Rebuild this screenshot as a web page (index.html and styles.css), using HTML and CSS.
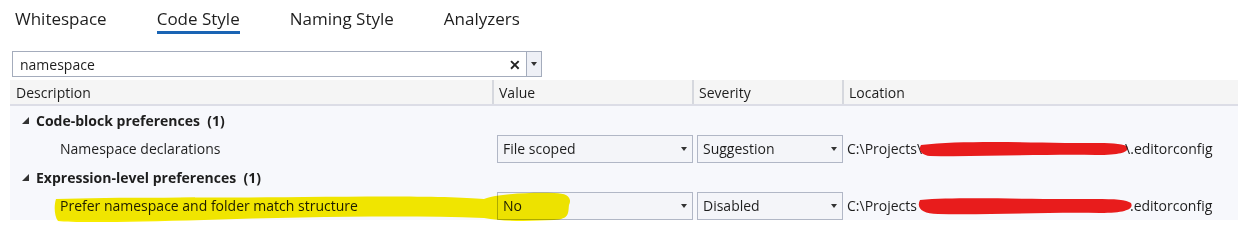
FILE: index.html
```html
<!DOCTYPE html>
<html>
<head>
<meta charset="utf-8">
<link rel="stylesheet" href="styles.css">
</head>
<body>
<div class="page">
  <nav class="tabs">
    <span class="tab">Whitespace</span>
    <span class="tab active">Code Style</span>
    <span class="tab">Naming Style</span>
    <span class="tab">Analyzers</span>
  </nav>

  <div class="search">
    <div class="search-input">namespace<span class="clear">✕</span></div>
    <div class="search-drop"><span class="arrow"></span></div>
  </div>

  <div class="table">
    <div class="row header">
      <div class="cell">Description</div>
      <div class="cell sep">Value</div>
      <div class="cell sep">Severity</div>
      <div class="cell sep">Location</div>
    </div>

    <div class="row group">
      <div class="cell group-cell"><span class="tri"></span>Code-block preferences&nbsp; (1)</div>
    </div>
    <div class="row item">
      <div class="cell desc">Namespace declarations</div>
      <div class="cell"><div class="combo value">File scoped<span class="arrow"></span></div></div>
      <div class="cell"><div class="combo sev">Suggestion<span class="arrow"></span></div></div>
      <div class="cell loc">C:\Projects\<span class="redact r1"><svg width="213" height="20" viewBox="0 0 213 20"><path d="M3 6 C 40 2, 90 3, 147 4 C 178 4, 200 3, 209 7 C 212 12, 206 16, 178 16 C 126 15, 62 18, 12 17 C 3 16, 0 11, 3 6 Z" fill="#e81c1c"/></svg></span>\.editorconfig</div>
    </div>

    <div class="row group">
      <div class="cell group-cell"><span class="tri"></span>Expression-level preferences&nbsp; (1)</div>
    </div>
    <div class="row item">
      <div class="cell desc">Prefer namespace and folder match structure</div>
      <div class="cell"><div class="combo value">No<span class="arrow"></span></div></div>
      <div class="cell"><div class="combo sev">Disabled<span class="arrow"></span></div></div>
      <div class="cell loc">C:\Projects<span class="redact r2"><svg width="218" height="20" viewBox="0 0 218 20"><path d="M4 4 C 40 1, 92 3, 152 3 C 188 3, 209 2, 215 7 C 218 13, 210 17, 184 17 C 132 16, 72 19, 22 18 C 6 18, 0 12, 4 4 Z" fill="#e81c1c"/></svg></span>.editorconfig</div>
    </div>

    <svg class="highlight" width="520" height="32" viewBox="0 0 520 32">
      <path d="M2 8 C 60 6, 150 7, 250 6 C 330 5, 400 5, 430 8 L 430 8 C 440 4, 470 1, 500 2 C 515 2, 518 8, 515 14 C 514 22, 516 28, 500 29 C 480 30, 450 31, 430 27 C 350 24, 250 26, 150 29 C 80 31, 20 32, 4 30 C 0 25, 0 14, 2 8 Z" fill="#f8ec00"/>
    </svg>
  </div>
</div>
</body>
</html>
```

FILE: styles.css
```css
* { box-sizing: border-box; }

html, body {
  margin: 0;
  padding: 0;
  background: #ffffff;
}

body {
  font-family: "Open Sans", "Noto Sans", sans-serif;
  color: #1e1e1e;
  font-size: 14px;
}

.page {
  width: 1238px;
  height: 240px;
  overflow: hidden;
}

/* Tabs */
.tabs {
  display: flex;
  gap: 50px;
  padding-left: 15px;
  height: 51px;
  padding-top: 7px;
}

.tab {
  font-size: 17px;
  line-height: 24px;
  height: 27px;
  color: #1e1e1e;
}

.tab.active {
  border-bottom: 3px solid #1a64b4;
}

/* Search */
.search {
  display: flex;
  margin-left: 12px;
  width: 530px;
  height: 26px;
}

.search-input {
  flex: 1;
  border: 1px solid #a4acbc;
  border-right: none;
  background: #fff;
  display: flex;
  align-items: center;
  padding-left: 7px;
  font-size: 14px;
  position: relative;
}

.clear {
  position: absolute;
  right: 5px;
  top: 3px;
  font-size: 14px;
  font-weight: 700;
  color: #222;
}

.search-drop {
  width: 16px;
  border: 1px solid #a4acbc;
  background: #eef0f6;
  display: flex;
  align-items: center;
  justify-content: center;
}

.arrow {
  width: 0;
  height: 0;
  border-left: 3.5px solid transparent;
  border-right: 3.5px solid transparent;
  border-top: 4px solid #333;
}

/* Table */
.table {
  margin-top: 3px;
  margin-left: 10px;
  position: relative;
}

.row {
  display: grid;
  grid-template-columns: 482px 200px 150px 1fr;
  align-items: center;
}

.header {
  background: #f5f5f5;
  height: 26px;
  border-bottom: 2px solid #dcdde6;
  align-items: stretch;
}

.header .cell {
  padding-left: 6px;
  padding-top: 2px;
  line-height: 22px;
}

.header .sep {
  border-left: 2px solid #d6d8de;
  padding-left: 5px;
}

.group, .item {
  background: #f7f8fc;
}

.group {
  height: 28px;
}

.item {
  height: 29px;
}

.group-cell {
  grid-column: 1 / -1;
  font-weight: 700;
  display: flex;
  align-items: center;
  padding-left: 12px;
}

.tri {
  width: 0;
  height: 0;
  border-left: 7px solid transparent;
  border-bottom: 7px solid #333;
  margin-right: 7px;
}

.desc {
  padding-left: 50px;
  position: relative;
  z-index: 1;
}

.combo {
  margin-left: 5px;
  height: 28px;
  border: 1px solid #b1b7c6;
  background: #f4f5f9;
  display: flex;
  align-items: center;
  justify-content: space-between;
  padding: 0 5px 0 5px;
  position: relative;
  z-index: 1;
}

.combo.value { width: 196px; }
.combo.sev { width: 146px; }

.loc {
  padding-left: 5px;
  white-space: nowrap;
  display: flex;
  align-items: center;
}

.redact {
  display: inline-flex;
}

.r1 { margin-left: -4px; margin-right: -6px; }
.r2 { margin-left: -1px; margin-right: -4px; }

.highlight {
  position: absolute;
  left: 44px;
  top: 111px;
  mix-blend-mode: multiply;
  z-index: 2;
  pointer-events: none;
}
```
